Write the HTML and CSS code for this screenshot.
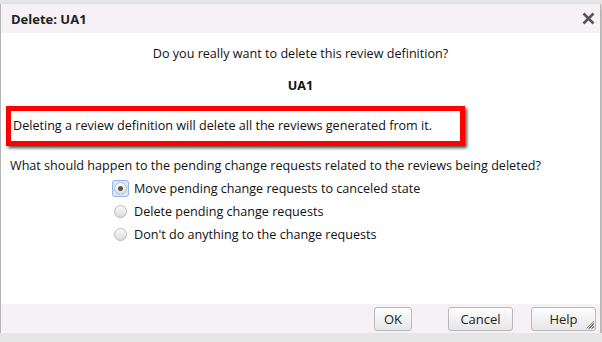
FILE: index.html
```html
<!DOCTYPE html>
<html lang="en">
<head>
    <meta charset="UTF-8">
    <title>Delete: UA1</title>
    <link rel="stylesheet" href="styles.css">
</head>
<body>
    <div class="dialog">
        <div class="titlebar">
            <span class="title">Delete: UA1</span>
            <svg class="close" width="13" height="13" viewBox="0 0 13 13">
                <path d="M1.5 1.5 L11.5 11.5 M11.5 1.5 L1.5 11.5" stroke="#555" stroke-width="2.6"/>
            </svg>
        </div>
        <div class="content">
            <p class="question">Do you really want to delete this review definition?</p>
            <p class="name">UA1</p>
            <div class="warning">Deleting a review definition will delete all the reviews generated from it.</div>
            <p class="prompt">What should happen to the pending change requests related to the reviews being deleted?</p>
            <div class="options">
                <label class="option"><span class="focus"><span class="radio checked"></span></span>Move pending change requests to canceled state</label>
                <label class="option"><span class="focus blank"><span class="radio"></span></span>Delete pending change requests</label>
                <label class="option"><span class="focus blank"><span class="radio"></span></span>Don't do anything to the change requests</label>
            </div>
        </div>
        <div class="footer">
            <button class="btn btn-ok">OK</button>
            <button class="btn btn-cancel">Cancel</button>
            <button class="btn btn-help">Help<span class="grip"></span></button>
        </div>
    </div>
</body>
</html>
```

FILE: styles.css
```css
body {
    margin: 0;
    background-color: #e6e6e6;
    font-family: "Open Sans", "DejaVu Sans", sans-serif;
    font-size: 12.6px;
    color: #111;
}
.dialog {
    margin-top: 4px;
    width: 599px;
    border-left: 1px solid #b5b5b5;
    border-right: 1px solid #b5b5b5;
    background-color: #fff;
    box-shadow: 0 4px 6px rgba(0, 0, 0, 0.35);
}
.titlebar {
    height: 29px;
    display: flex;
    align-items: center;
    justify-content: space-between;
    padding: 0 5px 0 10px;
    background-color: #f5f1f4;
}
.title {
    font-weight: bold;
    font-size: 13px;
    color: #222;
}
.close {
    display: block;
}
.content {
    height: 271px;
    padding: 0 9px;
}
.question {
    margin: 0;
    padding-top: 12px;
    text-align: center;
}
.name {
    margin: 15px 0 0;
    text-align: center;
    font-weight: bold;
}
.warning {
    margin: 12px 0 0 -4px;
    width: 445px;
    padding: 6px 2px 7px;
    border: 5px solid #f00;
    box-shadow: 2px 2px 3px rgba(0, 0, 0, 0.7);
}
.prompt {
    margin: 11px 0 0;
}
.options {
    display: flex;
    flex-direction: column;
    gap: 5px;
    margin-top: 5px;
    padding-left: 102px;
}
.option {
    display: flex;
    align-items: center;
    gap: 5px;
    height: 18px;
}
.focus {
    display: flex;
    align-items: center;
    justify-content: center;
    width: 15px;
    height: 15px;
    border: 1px solid #8fb5ec;
    border-radius: 3px;
    background-color: #dce8fb;
}
.focus.blank {
    border-color: transparent;
    background-color: transparent;
}
.radio {
    width: 11px;
    height: 11px;
    border-radius: 50%;
    border: 1px solid #b8b8b8;
    background: linear-gradient(#fbfbfb, #dcdcdc);
    position: relative;
}
.radio.checked::after {
    content: "";
    position: absolute;
    left: 3px;
    top: 3px;
    width: 5px;
    height: 5px;
    border-radius: 50%;
    background-color: #555;
}
.footer {
    height: 29px;
    display: flex;
    align-items: center;
    justify-content: flex-end;
    padding-right: 4px;
    background-color: #f5f1f4;
}
.btn {
    height: 24px;
    font-family: inherit;
    font-size: 13px;
    color: #222;
    border: 1px solid #b9b9b9;
    border-radius: 3px;
    background: linear-gradient(#fdfdfd, #e6e6e6);
    position: relative;
}
.btn-ok {
    width: 38px;
}
.btn-cancel {
    width: 65px;
    margin-left: 36px;
}
.btn-help {
    width: 65px;
    margin-left: 18px;
}
.grip {
    position: absolute;
    right: 1px;
    bottom: 1px;
    width: 8px;
    height: 8px;
    background: repeating-linear-gradient(135deg, transparent 0 1px, #777 1px 2px);
    clip-path: polygon(100% 0, 100% 100%, 0 100%);
}
```
